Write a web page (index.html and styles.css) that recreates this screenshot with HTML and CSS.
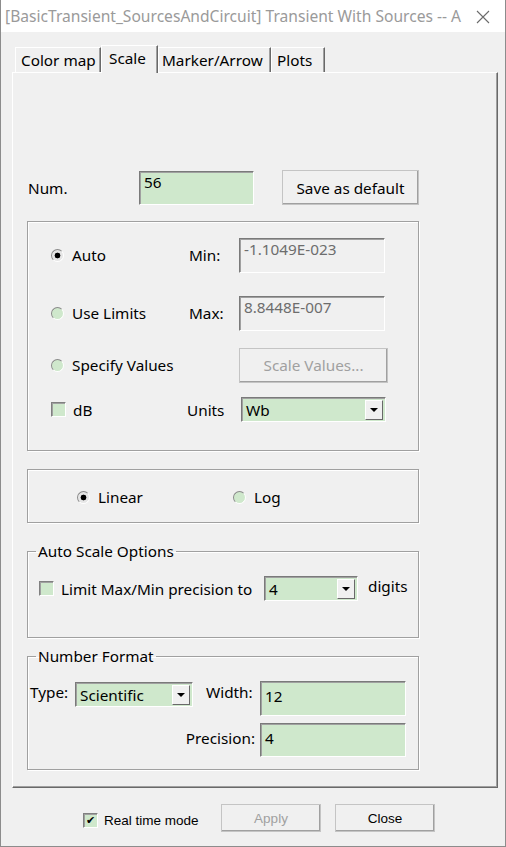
FILE: index.html
```html
<!DOCTYPE html>
<html lang="en">
<head>
    <meta charset="UTF-8">
    <meta name="viewport" content="width=device-width, initial-scale=1.0">
    <title>Transient With Sources</title>
    <link rel="stylesheet" href="styles.css">
</head>
<body>
<div class="window">

    <!-- Title bar -->
    <div class="titlebar">
        <span class="title">[BasicTransient_SourcesAndCircuit] Transient With Sources -- A</span>
        <svg class="close-x" width="14" height="14" viewBox="0 0 14 14">
            <path d="M1 1 L13 13 M13 1 L1 13" stroke="#6b6b6b" stroke-width="1.1" fill="none"/>
        </svg>
    </div>

    <!-- Tabs -->
    <div class="tabs">
        <div class="tab tab-color">Color map</div>
        <div class="tab tab-scale active">Scale</div>
        <div class="tab tab-marker">Marker/Arrow</div>
        <div class="tab tab-plots">Plots</div>
    </div>

    <div class="panel">

        <!-- Num row -->
        <div class="num-row">
            <span class="num-label">Num.</span>
            <div class="field num-field">56</div>
            <button class="btn save-btn">Save as default</button>
        </div>

        <!-- Range group -->
        <div class="group range-group">
            <div class="range-row">
                <label class="opt"><span class="radio checked"></span>Auto</label>
                <span class="r-label">Min:</span>
                <div class="field disabled range-field">-1.1049E-023</div>
            </div>
            <div class="range-row row2">
                <label class="opt"><span class="radio"></span>Use Limits</label>
                <span class="r-label">Max:</span>
                <div class="field disabled range-field">8.8448E-007</div>
            </div>
            <div class="range-row row3">
                <label class="opt"><span class="radio"></span>Specify Values</label>
                <span class="r-label"></span>
                <button class="btn disabled-btn scale-btn">Scale Values...</button>
            </div>
            <div class="range-row row4">
                <label class="opt db"><span class="check"></span>dB</label>
                <span class="r-label units">Units</span>
                <div class="combo units-combo">
                    <span class="combo-text">Wb</span>
                    <span class="combo-btn"></span>
                </div>
            </div>
        </div>

        <!-- Linear / Log -->
        <div class="group lin-group">
            <label class="opt lin-opt"><span class="radio checked"></span>Linear</label>
            <label class="opt"><span class="radio"></span>Log</label>
        </div>

        <!-- Auto scale options -->
        <fieldset class="fgroup auto-group">
            <legend>Auto Scale Options</legend>
            <div class="auto-row">
                <label class="opt limit-opt"><span class="check"></span>Limit Max/Min precision to</label>
                <div class="combo digits-combo">
                    <span class="combo-text">4</span>
                    <span class="combo-btn"></span>
                </div>
                <span class="digits">digits</span>
            </div>
        </fieldset>

        <!-- Number format -->
        <fieldset class="fgroup format-group">
            <legend>Number Format</legend>
            <div class="format-grid">
                <span class="f-label">Type:</span>
                <div class="combo type-combo">
                    <span class="combo-text">Scientific</span>
                    <span class="combo-btn"></span>
                </div>
                <span></span>
                <span class="f-label">Width:</span>
                <div class="field fmt-field">12</div>
                <span class="f-label prec-label">Precision:</span>
                <div class="field fmt-field">4</div>
            </div>
        </fieldset>
    </div>

    <!-- Bottom buttons -->
    <div class="bottom-bar">
        <label class="rt-opt"><span class="check on">&#10004;</span>Real time mode</label>
        <button class="btn small-btn disabled-btn">Apply</button>
        <button class="btn small-btn">Close</button>
    </div>

</div>
</body>
</html>
```

FILE: styles.css
```css
* {
    margin: 0;
    padding: 0;
    box-sizing: border-box;
}

body {
    font-family: "Noto Sans", "Open Sans", sans-serif;
    font-size: 15.3px;
    color: #000;
    background-color: #6f7f78;
}

/* Window frame */
.window {
    width: 506px;
    height: 847px;
    background-color: #f0f0f0;
    border: 1px solid #8c8c8c;
    border-top: none;
}

.titlebar {
    height: 32px;
    background-color: #fff;
    display: flex;
    align-items: center;
    padding-left: 4px;
}

.title {
    font-size: 15.6px;
    color: #9a9a9a;
    white-space: nowrap;
}

.close-x {
    margin-left: auto;
    margin-right: 15px;
    margin-top: 1px;
}

/* Tabs */
.tabs {
    display: flex;
    align-items: flex-end;
    margin-left: 14px;
    margin-top: 12px;
    height: 28px;
    position: relative;
    z-index: 1;
}

.tab {
    height: 25px;
    padding-left: 5px;
    line-height: 24px;
    border-top: 1px solid #fff;
    border-left: 1px solid #fff;
    border-right: 1px solid #696969;
    box-shadow: inset -1px 0 0 #a0a0a0;
    white-space: nowrap;
}

.tab-color {
    width: 86px;
}

.tab-scale {
    width: 57px;
}

.tab-marker {
    width: 113px;
    padding-left: 3px;
}

.tab-plots {
    width: 54px;
}

.tab.active {
    height: 28px;
    line-height: 24px;
    margin-bottom: -1px;
    background-color: #f0f0f0;
    padding-left: 7px;
}

/* Tab panel */
.panel {
    margin-left: 11px;
    width: 486px;
    height: 716px;
    border-top: 1px solid #fff;
    border-left: 1px solid #fff;
    border-right: 1px solid #696969;
    border-bottom: 1px solid #696969;
    box-shadow: inset -1px -1px 0 #a0a0a0;
    padding: 97px 0 0 14px;
}

/* Common controls */
.field {
    background-color: #cfe8cc;
    border: 1px solid;
    border-color: #7a7a7a #fff #fff #7a7a7a;
    box-shadow: inset 1px 1px 0 #a0a0a0;
    padding: 0 0 0 4px;
    line-height: 20px;
}

.field.disabled {
    background-color: #f0f0f0;
    color: #6d6d6d;
}

.btn {
    font-family: inherit;
    font-size: 15.3px;
    background-color: #f0f0f0;
    border: 1px solid;
    border-color: #fff #696969 #696969 #fff;
    box-shadow: inset -1px -1px 0 #a0a0a0;
    outline: 1px solid #c4c4c4;
    outline-offset: -1px;
    color: #000;
}

.btn.disabled-btn {
    color: #a0a0a0;
}

.radio {
    width: 13px;
    height: 13px;
    border-radius: 50%;
    border: 1px solid;
    border-color: #8a8a8a #fff #fff #8a8a8a;
    background-color: #cfe8cc;
    flex-shrink: 0;
}

.radio.checked {
    background: radial-gradient(circle, #000 0, #000 2.6px, #e6e6e6 3.2px);
}

.check {
    width: 15px;
    height: 15px;
    border: 1px solid;
    border-color: #808080 #fff #fff #808080;
    box-shadow: inset 1px 1px 0 #a0a0a0;
    background-color: #cfe8cc;
    flex-shrink: 0;
    font-size: 11px;
    line-height: 13px;
    text-align: center;
}

.opt {
    display: flex;
    align-items: center;
    gap: 8px;
    white-space: nowrap;
}

.combo {
    display: flex;
    align-items: center;
    height: 25px;
    background-color: #cfe8cc;
    border: 1px solid;
    border-color: #7a7a7a #fff #fff #7a7a7a;
    box-shadow: inset 1px 1px 0 #a0a0a0;
    padding: 1px 2px 1px 4px;
}

.combo-text {
    flex: 1;
    line-height: 20px;
}

.combo-btn {
    width: 18px;
    height: 20px;
    background-color: #f0f0f0;
    border: 1px solid;
    border-color: #fff #696969 #696969 #fff;
    display: flex;
    align-items: center;
    justify-content: center;
}

.combo-btn::after {
    content: "";
    border-left: 4px solid transparent;
    border-right: 4px solid transparent;
    border-top: 4px solid #000;
}

/* Group boxes */
.group {
    width: 392px;
    border: 1px solid #a0a0a0;
    box-shadow: inset 1px 1px 0 #fff, 1px 1px 0 #fff;
}

/* Num row */
.num-row {
    display: flex;
    align-items: center;
    height: 35px;
    margin-left: 1px;
}

.num-label {
    width: 111px;
}

.num-field {
    width: 115px;
    height: 34px;
    margin-top: 1px;
}

.save-btn {
    width: 137px;
    height: 35px;
    margin-left: 28px;
}

/* Range group */
.range-group {
    margin-top: 16px;
    height: 230px;
    padding: 16px 0 0 23px;
}

.range-row {
    display: flex;
    align-items: center;
    height: 34px;
}

.range-row .opt {
    width: 138px;
}

.range-row.row2 {
    margin-top: 24px;
}

.range-row.row3 {
    margin-top: 18px;
}

.range-row.row4 {
    margin-top: 15px;
    height: 25px;
}

.opt.db {
    gap: 7px;
}

.r-label {
    width: 50px;
}

.r-label.units {
    width: 54px;
    margin-left: -2px;
}

.range-field {
    width: 146px;
    height: 35px;
}

.scale-btn {
    width: 149px;
    height: 35px;
}

.units-combo {
    width: 145px;
}

/* Linear / Log */
.lin-group {
    margin-top: 18px;
    height: 54px;
    display: flex;
    align-items: center;
    padding: 2px 0 0 49px;
}

.lin-opt {
    width: 156px;
}

/* Fieldsets */
.fgroup {
    width: 392px;
    border: 1px solid #a0a0a0;
    box-shadow: inset 1px 1px 0 #fff, 1px 1px 0 #fff;
    min-width: 0;
    padding: 0;
}

.fgroup legend {
    margin-left: 8px;
    padding: 0 2px;
    line-height: 20px;
}

.auto-group {
    margin-top: 18px;
    height: 97px;
}

.auto-row {
    display: flex;
    align-items: center;
    height: 25px;
    margin: 15px 0 0 11px;
}

.limit-opt {
    width: 225px;
    gap: 7px;
}

.digits-combo {
    width: 94px;
}

.digits {
    margin-left: 10px;
    white-space: nowrap;
    margin-top: -5px;
}

.format-group {
    margin-top: 8px;
    height: 124px;
}

.format-grid {
    display: grid;
    grid-template-columns: 45px 118px 13px 54px 146px;
    grid-template-rows: 35px 34px;
    row-gap: 7px;
    align-items: start;
    margin: 15px 0 0 2px;
}

.f-label {
    line-height: 20px;
    margin-top: 1px;
}

.type-combo {
    margin-top: 1px;
}

.prec-label {
    grid-column: 1 / 5;
    text-align: right;
    padding-right: 5px;
    margin-top: 5px;
}

.fmt-field {
    height: 100%;
    padding-top: 4px;
}

/* Bottom bar */
.bottom-bar {
    display: flex;
    align-items: center;
    margin-top: 16px;
    padding-left: 82px;
    height: 28px;
    font-family: "Liberation Sans", Arial, sans-serif;
    font-size: 13.5px;
}

.rt-opt {
    display: flex;
    align-items: center;
    gap: 6px;
    width: 138px;
    margin-top: 4px;
}

.small-btn {
    font-family: "Liberation Sans", Arial, sans-serif;
    font-size: 13.5px;
    width: 100px;
    height: 28px;
    margin-right: 14px;
}
```
